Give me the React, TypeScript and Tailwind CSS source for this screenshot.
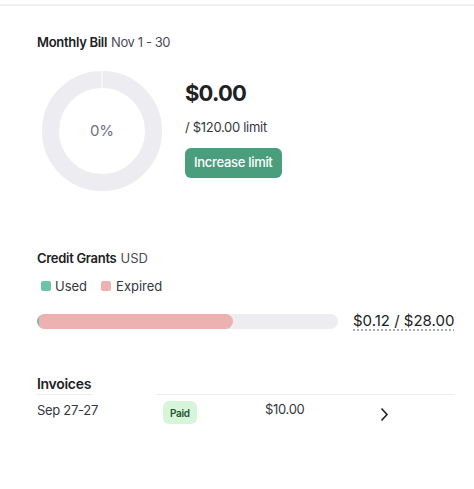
export default function App() {
  const r = 51.5;
  return (
    <div className="min-h-screen bg-white text-[#202123]" style={{ fontFamily: "Inter, 'Liberation Sans', sans-serif" }}>
      <div className="h-[6px] border-b-2 border-[#f1f1f3]" />

      <div className="pl-[37px] pr-[19px]">
        {/* Monthly bill */}
        <div className="pt-[27px] flex items-baseline gap-[4px] text-[13px] leading-[18px]">
          <span className="font-semibold tracking-[-0.3px]">Monthly Bill</span>
          <span className="text-[#4b4b57] tracking-[-0.4px]">Nov 1 - 30</span>
        </div>

        <div className="mt-[15px] flex">
          <div className="relative w-[130px] h-[130px] shrink-0">
            <svg width="130" height="130" viewBox="0 0 130 130">
              <circle cx="65" cy="65" r={r} fill="none" stroke="#ececf1" strokeWidth="17" />
              <line x1="65" y1="4" x2="65" y2="22" stroke="#ffffff" strokeWidth="1" />
            </svg>
            <div className="absolute inset-0 flex items-center justify-center text-[15px] text-[#6e6e80]">0%</div>
          </div>

          <div className="ml-[18px] pt-[12px] flex flex-col items-start">
            <div className="text-[22px] leading-[30px] font-bold tracking-[-0.8px]">$0.00</div>
            <div className="mt-[10px] text-[13px] leading-[18px] text-[#353740] tracking-[-0.3px]">/ $120.00 limit</div>
            <button className="mt-[12px] h-[30px] px-[9px] rounded-[6px] bg-[#4b9e7d] text-white text-[13px] font-medium tracking-[-0.3px]">
              Increase limit
            </button>
          </div>
        </div>

        {/* Credit grants */}
        <div className="mt-[53px] flex items-baseline gap-[4px] text-[13px] leading-[18px]">
          <span className="font-semibold tracking-[-0.3px]">Credit Grants</span>
          <span className="text-[#4b4b57]">USD</span>
        </div>

        <div className="mt-[10px] flex items-center text-[13px] leading-[18px] text-[#353740]">
          <span className="ml-[4px] w-[10px] h-[10px] rounded-[2px] bg-[#6cc3a5]" />
          <span className="ml-[4px]">Used</span>
          <span className="ml-[14px] w-[10px] h-[10px] rounded-[2px] bg-[#eeb1b1]" />
          <span className="ml-[5px]">Expired</span>
        </div>

        <div className="mt-[16px] flex items-center">
          <div className="w-[301px] h-[15px] rounded-full bg-[#ececf1] overflow-hidden flex">
            <div className="w-[2px] h-full bg-[#6cc3a5]" />
            <div className="w-[194px] h-full bg-[#eeb1b1] rounded-r-full" />
          </div>
          <span className="ml-[15px] text-[15px] leading-[20px] text-[#202123] underline decoration-dotted decoration-[#8e8ea0] underline-offset-[4px]">
            $0.12 / $28.00
          </span>
        </div>

        {/* Invoices */}
        <div className="mt-[44px] flex items-end">
          <div className="w-[56px] pb-[1px] border-b border-[#ececf1] text-[14px] leading-[18px] font-semibold tracking-[-0.3px]">
            Invoices
          </div>
          <div className="ml-[63px] flex-1 border-b border-[#ececf1]" />
        </div>
        <div className="flex text-[13px] leading-[18px] text-[#353740] tracking-[-0.3px]">
          <div className="w-[126px] pt-[6px]">Sep 27-27</div>
          <div className="w-[102px] pt-[6px]">
            <span className="inline-flex items-center h-[23px] px-[7px] rounded-[6px] bg-[#d7f5d8] text-[10px] font-semibold text-[#1f5132]">
              Paid
            </span>
          </div>
          <div className="w-[115px] pt-[5px]">$10.00</div>
          <div className="pt-[12px]">
            <svg width="9" height="15" viewBox="0 0 9 15" fill="none">
              <path d="M1.5 1.5 L7 7.5 L1.5 13.5" stroke="#202123" strokeWidth="1.6" />
            </svg>
          </div>
        </div>
      </div>
    </div>
  );
}
